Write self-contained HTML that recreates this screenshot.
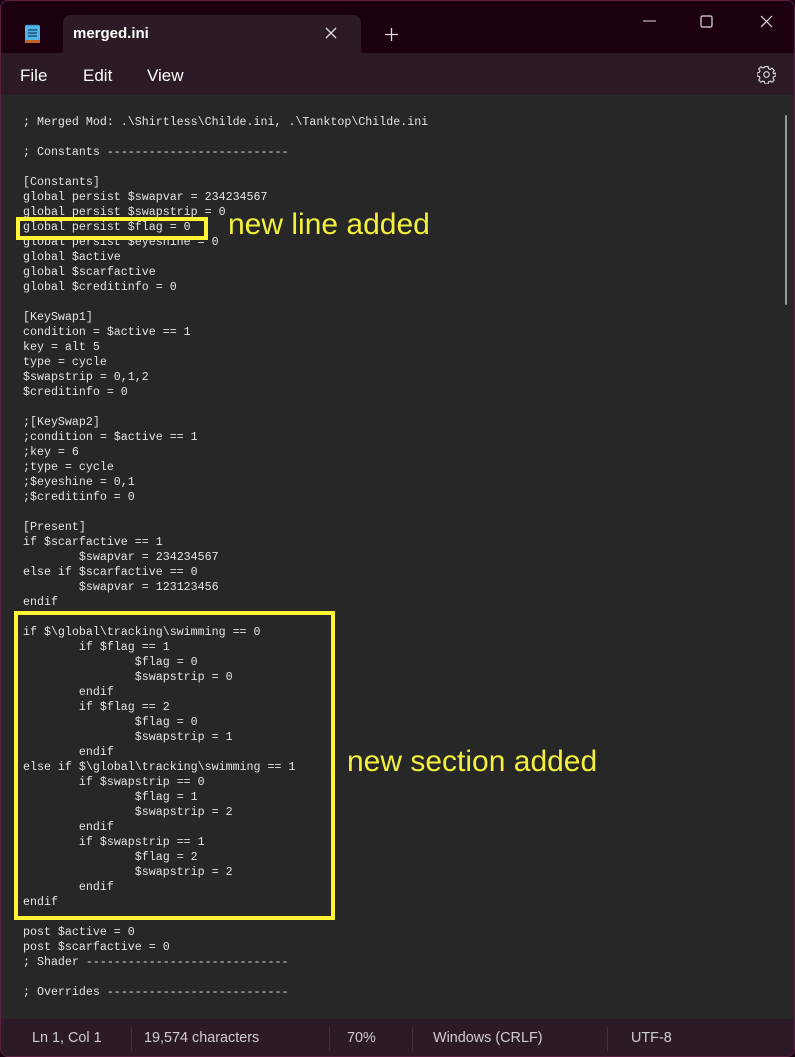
<!DOCTYPE html>
<html><head><meta charset="utf-8"><style>
*{margin:0;padding:0;box-sizing:border-box}
body{width:795px;height:1057px;background:#1c0312;position:relative;overflow:hidden;font-family:"Liberation Sans",sans-serif}
.win{position:absolute;left:0;top:0;width:795px;height:1057px;border:1px solid #5a2040;border-radius:8px;overflow:hidden;background:#1c0010}
.tab{position:absolute;left:62px;top:14px;width:298px;height:40px;background:#2c1b26;border-radius:8px 8px 0 0}
.tab .t{position:absolute;left:10px;top:10px;color:#fff;font-size:15px;font-weight:bold}
.menu{position:absolute;left:0;top:52px;width:795px;height:42px;background:#2c1b26;color:#fff;font-size:17px}
.menu span{position:absolute;top:13px}
.ed{position:absolute;left:0;top:94px;width:795px;height:924px;background:#272727}
pre{position:absolute;left:22px;top:114px;font-family:"Liberation Mono",monospace;font-size:11.65px;line-height:15px;color:#e4e4e4;tab-size:8}
.box{position:absolute;border:4px solid #fff534}
.ann{position:absolute;color:#f3f03c;font-size:30px;line-height:1}
.status{position:absolute;left:0;top:1018px;width:795px;height:39px;background:#2c1b26;color:#d0cdd0;font-size:14.4px}
.status span{position:absolute;top:11px}
.sep{position:absolute;top:8px;width:1px;height:24px;background:#40303a}
</style></head><body><div class="win">
<svg style="position:absolute;left:23px;top:22px" width="17" height="21" viewBox="0 0 17 21"><rect x="1" y="2" width="15" height="18" rx="2" fill="#4cb6e8"/><rect x="1" y="17" width="15" height="3" fill="#c0602a"/><g stroke="#1a3a5a" stroke-width="1.3"><line x1="4" y1="7" x2="13" y2="7"/><line x1="4" y1="10" x2="13" y2="10"/><line x1="4" y1="13" x2="13" y2="13"/></g><g stroke="#2a5a80" stroke-width="1"><line x1="4" y1="1" x2="4" y2="3"/><line x1="7" y1="1" x2="7" y2="3"/><line x1="10" y1="1" x2="10" y2="3"/><line x1="13" y1="1" x2="13" y2="3"/></g></svg>
<div class="tab"><span class="t">merged.ini</span>
<svg style="position:absolute;left:262px;top:12px" width="12" height="12"><path d="M1 1L11 11M11 1L1 11" stroke="#ddd" stroke-width="1.3"/></svg></div>
<svg style="position:absolute;left:384px;top:27px" width="13" height="13"><path d="M6.5 0V13M0 6.5H13" stroke="#ddd" stroke-width="1.3"/></svg>
<svg style="position:absolute;left:642px;top:19px" width="13" height="2"><path d="M0 1H13" stroke="#ddd" stroke-width="1"/></svg>
<svg style="position:absolute;left:699px;top:14px" width="13" height="13"><rect x="1" y="1" width="11" height="11" rx="1.5" fill="none" stroke="#ddd" stroke-width="1.2"/></svg>
<svg style="position:absolute;left:759px;top:14px" width="13" height="13"><path d="M1 1L12 12M12 1L1 12" stroke="#ddd" stroke-width="1.2"/></svg>
<div class="menu"><span style="left:19px">File</span><span style="left:82px">Edit</span><span style="left:146px">View</span>
<svg style="position:absolute;left:756px;top:12px" width="19" height="19" viewBox="0 0 24 24"><path d="M10 2h4l.6 2.8 2 .9 2.4-1.6 2.8 2.8-1.6 2.4.9 2L24 10v4l-2.9.6-.9 2 1.6 2.4-2.8 2.8-2.4-1.6-2 .9L14 24h-4l-.6-2.9-2-.9-2.4 1.6-2.8-2.8 1.6-2.4-.9-2L0 14v-4l2.9-.6.9-2L2.2 5l2.8-2.8 2.4 1.6 2-.9z" fill="none" stroke="#ddd" stroke-width="1.4"/><circle cx="12" cy="12" r="3.5" fill="none" stroke="#ddd" stroke-width="1.4"/></svg></div>
<div class="ed">
<div style="position:absolute;left:784px;top:20px;width:2px;height:190px;background:#9a9a9a;border-radius:1px"></div>
</div>
<pre>; Merged Mod: .\Shirtless\Childe.ini, .\Tanktop\Childe.ini

; Constants --------------------------

[Constants]
global persist $swapvar = 234234567
global persist $swapstrip = 0
global persist $flag = 0
global persist $eyeshine = 0
global $active
global $scarfactive
global $creditinfo = 0

[KeySwap1]
condition = $active == 1
key = alt 5
type = cycle
$swapstrip = 0,1,2
$creditinfo = 0

;[KeySwap2]
;condition = $active == 1
;key = 6
;type = cycle
;$eyeshine = 0,1
;$creditinfo = 0

[Present]
if $scarfactive == 1
	$swapvar = 234234567
else if $scarfactive == 0
	$swapvar = 123123456
endif

if $\global\tracking\swimming == 0
	if $flag == 1
		$flag = 0
		$swapstrip = 0
	endif
	if $flag == 2
		$flag = 0
		$swapstrip = 1
	endif
else if $\global\tracking\swimming == 1
	if $swapstrip == 0
		$flag = 1
		$swapstrip = 2
	endif
	if $swapstrip == 1
		$flag = 2
		$swapstrip = 2
	endif
endif

post $active = 0
post $scarfactive = 0
; Shader -----------------------------

; Overrides --------------------------</pre>
<div class="box" style="left:15px;top:216px;width:192px;height:23px"></div>
<div class="box" style="left:13px;top:610px;width:321px;height:309px"></div>
<div class="ann" style="left:227px;top:209px">new line added</div>
<div class="ann" style="left:346px;top:746px">new section added</div>
<div class="status"><span style="left:31px">Ln 1, Col 1</span><div class="sep" style="left:130px"></div><span style="left:143px">19,574 characters</span><div class="sep" style="left:328px"></div><span style="left:346px">70%</span><div class="sep" style="left:411px"></div><span style="left:432px">Windows (CRLF)</span><div class="sep" style="left:606px"></div><span style="left:630px">UTF-8</span></div>
</div></body></html>
